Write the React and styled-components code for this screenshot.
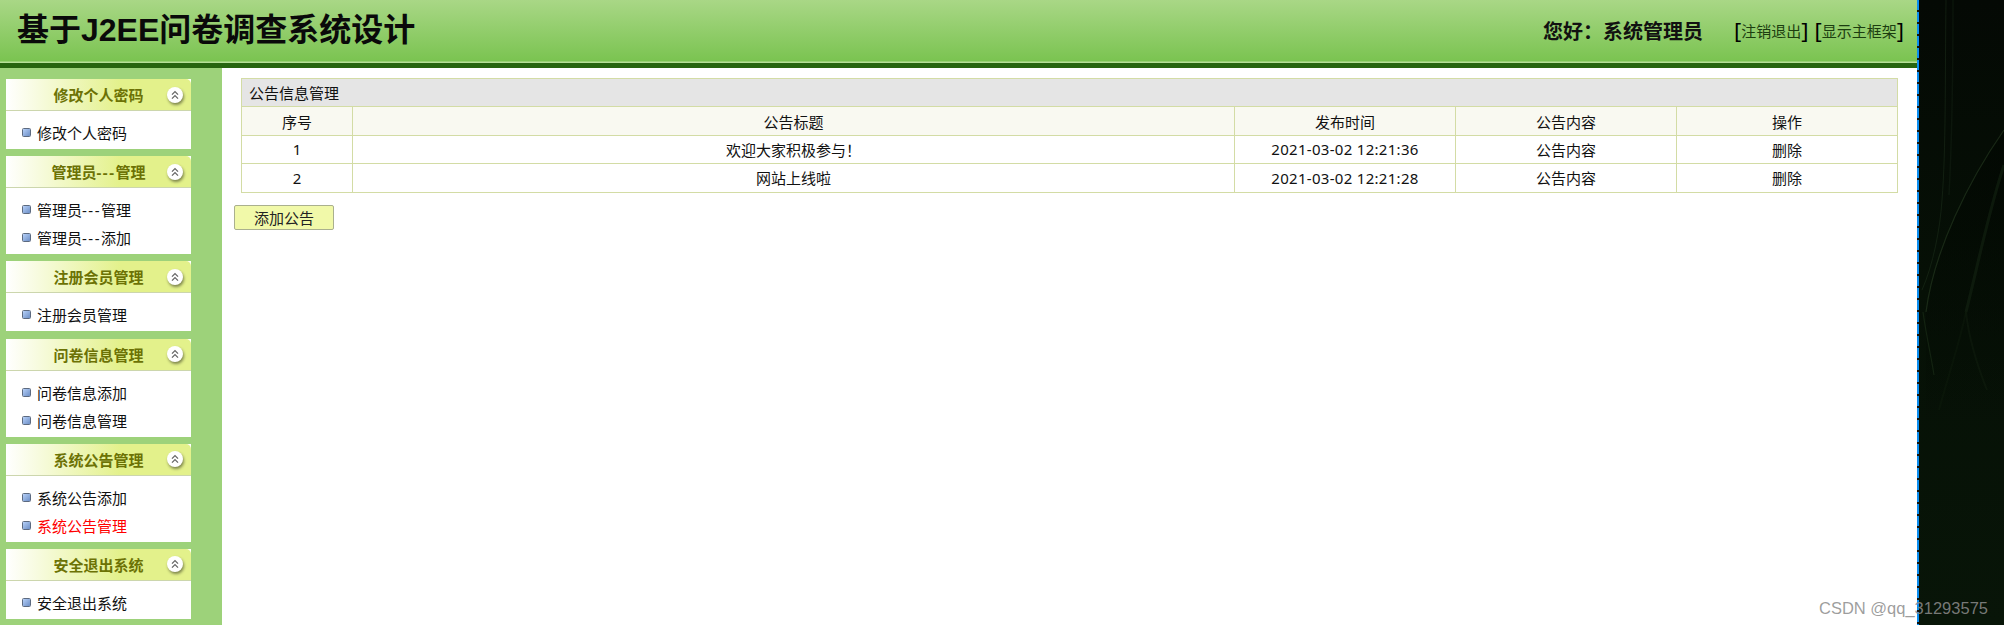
import React from "react";
import styled, { createGlobalStyle } from "styled-components";

const GlobalStyle = createGlobalStyle`
  html, body {
    margin: 0;
    padding: 0;
    background: #fff;
  }
  body {
    font-family: "Noto Sans", "Noto Sans CJK SC", sans-serif;
    font-size: 15px;
    color: #111;
  }
`;

const menus = [
  { title: "修改个人密码", items: ["修改个人密码"] },
  { title: "管理员---管理", items: ["管理员---管理", "管理员---添加"] },
  { title: "注册会员管理", items: ["注册会员管理"] },
  { title: "问卷信息管理", items: ["问卷信息添加", "问卷信息管理"] },
  { title: "系统公告管理", items: ["系统公告添加", "系统公告管理"], active: "系统公告管理" },
  { title: "安全退出系统", items: ["安全退出系统"] },
];

const columns = [
  { label: "序号", width: 111 },
  { label: "公告标题", width: 882 },
  { label: "发布时间", width: 221 },
  { label: "公告内容", width: 221 },
  { label: "操作", width: 221 },
];

const notices = [
  { id: 1, title: "欢迎大家积极参与！", time: "2021-03-02 12:21:36" },
  { id: 2, title: "网站上线啦", time: "2021-03-02 12:21:28" },
];

const Page = styled.div`
  display: flex;
  height: 625px;
  overflow: hidden;
  position: relative;
`;

const Main = styled.div`
  width: 1917px;
  flex: none;
  display: flex;
  flex-direction: column;
`;

const TopBar = styled.header`
  height: 68px;
  box-sizing: border-box;
  display: flex;
  align-items: center;
  justify-content: space-between;
  padding: 0 13px 3px 17px;
  background: linear-gradient(#a9d786, #79c34f);
  border-bottom: 5px solid #27650f;
  box-shadow: inset 0 -1.5px 0 #b7e098;
`;

const Title = styled.h1`
  margin: 0;
  font-family: "Liberation Sans", "Noto Sans CJK SC", sans-serif;
  font-size: 32px;
  font-weight: 700;
  line-height: 40px;
  color: #0a0a0a;
`;

const UserBox = styled.div`
  display: flex;
  align-items: center;
`;

const Greeting = styled.span`
  font-size: 20px;
  font-weight: 700;
  margin-right: 25px;
  white-space: nowrap;
`;

const TopLink = styled.a`
  display: flex;
  align-items: center;
  margin-left: 6px;
  color: #1c3d10;
  white-space: nowrap;
`;

const Bracket = styled.span`
  font-size: 22px;
  line-height: 24px;
  color: #000;
`;

const Body = styled.div`
  flex: 1;
  display: flex;
  min-height: 0;
`;

const Sidebar = styled.aside`
  width: 222px;
  flex: none;
  box-sizing: border-box;
  padding: 11px 31px 0 6px;
  background: #9dd27a;
  display: flex;
  flex-direction: column;
  gap: 7.2px;
`;

const MenuBox = styled.section`
  background: #fff;
`;

const MenuHead = styled.div`
  height: 32px;
  box-sizing: border-box;
  display: grid;
  grid-template-columns: 1fr auto 1fr;
  align-items: center;
  padding: 0 8px;
  border-radius: 5px 5px 0 0;
  border-bottom: 1px solid #ccd6ad;
  background: linear-gradient(90deg, #fff, #e3f18b 62%, #e3f18b);
`;

const MenuTitle = styled.h3`
  grid-column: 2;
  margin: 0;
  font-size: 15px;
  font-weight: 700;
  color: #6c7205;
  white-space: nowrap;
`;

const Toggle = styled.span`
  grid-column: 3;
  justify-self: end;
  width: 16px;
  height: 16px;
  border-radius: 50%;
  background: #fff;
  box-shadow: 1px 2px 3px rgba(0, 0, 0, 0.45);
  display: flex;
  align-items: center;
  justify-content: center;
`;

const MenuList = styled.ul`
  list-style: none;
  margin: 0;
  padding: 7.5px 0 2.5px 16px;
`;

const MenuItem = styled.li`
  height: 28px;
  display: flex;
  align-items: center;
  gap: 6px;
  white-space: nowrap;
  color: ${(p) => (p.$active ? "#f00" : "#111")};
`;

const Bullet = styled.i`
  width: 7px;
  height: 7px;
  border-radius: 1.5px;
  border: 0.5px solid #5c6a80;
  background: linear-gradient(135deg, #b6d0f8, #6d8fc6);
`;

const Dash = styled.span`
  letter-spacing: 1.5px;
`;

const Content = styled.main`
  flex: 1;
  min-width: 0;
  padding: 10px 0 0 12px;
  background: #fff;
`;

const Table = styled.table`
  width: 1656px;
  margin-left: 7px;
  table-layout: fixed;
  border-collapse: collapse;
`;

const Col = styled.col`
  width: ${(p) => p.$width}px;
`;

const Caption = styled.th`
  height: 27.4px;
  padding: 0 0 0 7px;
  text-align: left;
  font-weight: 400;
  background: #e5e5e5;
  border: 1px solid #d3dca5;
`;

const HeadCell = styled.th`
  height: 27.4px;
  padding: 0;
  text-align: center;
  font-weight: 400;
  background: #f9f9f1;
  border: 1px solid #d3dca5;
`;

const Cell = styled.td`
  height: 27.4px;
  padding: 0;
  text-align: center;
  border: 1px solid #d3dca5;
`;

const TimeCell = styled(Cell)`
  letter-spacing: 0.3px;
`;

const AddButton = styled.button`
  display: block;
  width: 100px;
  height: 25px;
  margin-top: 12px;
  padding: 0;
  font: inherit;
  color: #222;
  background: #f1f9a9;
  border: 1px solid #aab08e;
  border-radius: 2px;
`;

const Rule = styled.div`
  width: 2px;
  flex: none;
  background: repeating-linear-gradient(#0a8df0 0 10px, #10130f 10px 12px);
`;

const Backdrop = styled.div`
  flex: 1;
  background: linear-gradient(#040904, #061006 45%, #081508);

  svg {
    display: block;
    width: 100%;
    height: 100%;
  }
`;

const Watermark = styled.span`
  position: absolute;
  right: 16px;
  bottom: 7px;
  font-family: "Liberation Sans", sans-serif;
  font-size: 16.5px;
  line-height: 20px;
  color: rgba(140, 140, 140, 0.85);
`;

const Chevrons = () => (
  <svg width="10" height="10" viewBox="0 0 10 10" fill="none" stroke="#666" strokeWidth="1.3">
    <path d="M2 4.6 5 1.6 8 4.6" />
    <path d="M2 8.6 5 5.6 8 8.6" />
  </svg>
);

const Curves = () => (
  <svg viewBox="0 0 85 625" preserveAspectRatio="none" fill="none">
    <defs>
      <linearGradient id="hollow" x1="0" y1="0" x2="0" y2="1">
        <stop offset="0" stopColor="#020802" stopOpacity="0.8" />
        <stop offset="1" stopColor="#020802" stopOpacity="0" />
      </linearGradient>
    </defs>
    <path d="M7 312C15 250 50 180 85 130V430H7Z" fill="url(#hollow)" />
    <path d="M7 312C15 250 50 180 85 130" stroke="#2a4024" strokeWidth="1.2" opacity="0.55" />
    <path d="M47 312C60 260 70 210 85 165" stroke="#1c2f18" strokeWidth="3" opacity="0.4" />
    <path d="M27 0C26 80 27 150 23 200 21 230 14 265 3 290" stroke="#223620" strokeWidth="1" opacity="0.45" />
    <path d="M34 0C34 70 33 140 30 195" stroke="#172616" strokeWidth="1.5" opacity="0.4" />
    <path d="M4 312C8 340 12 355 15 375" stroke="#233a20" strokeWidth="1.2" opacity="0.45" />
    <path d="M47 312C50 340 58 365 68 390" stroke="#162614" strokeWidth="2" opacity="0.35" />
    <path d="M47 312C40 345 28 380 20 410" stroke="#12200f" strokeWidth="2" opacity="0.35" />
  </svg>
);

// the hyphens in the menu labels are wider than the font's own
const MenuLabel = ({ text }) => {
  const parts = text.split("---");
  if (parts.length === 1) return text;
  return (
    <span>
      {parts[0]}
      <Dash>---</Dash>
      {parts[1]}
    </span>
  );
};

const App = () => {
  return (
    <>
      <GlobalStyle />
      <Page>
        <Main>
          <TopBar>
            <Title>基于J2EE问卷调查系统设计</Title>
            <UserBox>
              <Greeting>您好：系统管理员</Greeting>
              <TopLink><Bracket>[</Bracket>注销退出<Bracket>]</Bracket></TopLink>
              <TopLink><Bracket>[</Bracket>显示主框架<Bracket>]</Bracket></TopLink>
            </UserBox>
          </TopBar>
          <Body>
            <Sidebar>
              {menus.map((menu) => (
                <MenuBox key={menu.title}>
                  <MenuHead>
                    <MenuTitle><MenuLabel text={menu.title} /></MenuTitle>
                    <Toggle><Chevrons /></Toggle>
                  </MenuHead>
                  <MenuList>
                    {menu.items.map((item) => (
                      <MenuItem key={item} $active={item === menu.active}>
                        <Bullet />
                        <MenuLabel text={item} />
                      </MenuItem>
                    ))}
                  </MenuList>
                </MenuBox>
              ))}
            </Sidebar>
            <Content>
              <Table>
                <colgroup>
                  {columns.map((col) => (
                    <Col key={col.label} $width={col.width} />
                  ))}
                </colgroup>
                <thead>
                  <tr>
                    <Caption colSpan={5}>公告信息管理</Caption>
                  </tr>
                  <tr>
                    {columns.map((col) => (
                      <HeadCell key={col.label}>{col.label}</HeadCell>
                    ))}
                  </tr>
                </thead>
                <tbody>
                  {notices.map((notice) => (
                    <tr key={notice.id}>
                      <Cell>{notice.id}</Cell>
                      <Cell>{notice.title}</Cell>
                      <TimeCell>{notice.time}</TimeCell>
                      <Cell>公告内容</Cell>
                      <Cell>删除</Cell>
                    </tr>
                  ))}
                </tbody>
              </Table>
              <AddButton>添加公告</AddButton>
            </Content>
          </Body>
        </Main>
        <Rule />
        <Backdrop>
          <Curves />
        </Backdrop>
        <Watermark>CSDN @qq_31293575</Watermark>
      </Page>
    </>
  );
};

export default App;
